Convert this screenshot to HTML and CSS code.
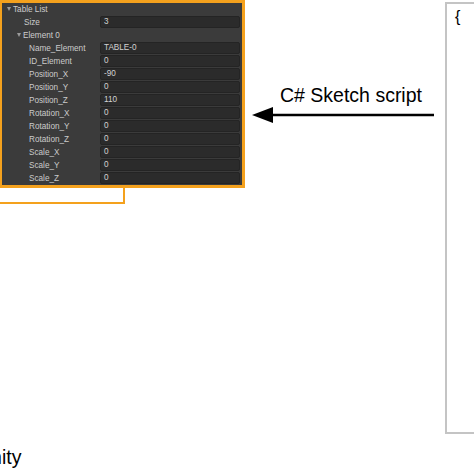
FILE: index.html
```html
<!DOCTYPE html>
<html>
<head>
<meta charset="utf-8">
<link rel="stylesheet" href="styles.css">
</head>
<body>
<div class="canvas">
  <div class="panel">
    <div class="row head lvl0"><span class="tri"></span><span>Table List</span></div>
    <div class="row prop"><span class="label lvl1">Size</span><span class="field">3</span></div>
    <div class="row head lvl1"><span class="tri"></span><span>Element 0</span></div>
    <div class="row prop"><span class="label lvl2">Name_Element</span><span class="field">TABLE-0</span></div>
    <div class="row prop"><span class="label lvl2">ID_Element</span><span class="field">0</span></div>
    <div class="row prop"><span class="label lvl2">Position_X</span><span class="field">-90</span></div>
    <div class="row prop"><span class="label lvl2">Position_Y</span><span class="field">0</span></div>
    <div class="row prop"><span class="label lvl2">Position_Z</span><span class="field">110</span></div>
    <div class="row prop"><span class="label lvl2">Rotation_X</span><span class="field">0</span></div>
    <div class="row prop"><span class="label lvl2">Rotation_Y</span><span class="field">0</span></div>
    <div class="row prop"><span class="label lvl2">Rotation_Z</span><span class="field">0</span></div>
    <div class="row prop"><span class="label lvl2">Scale_X</span><span class="field">0</span></div>
    <div class="row prop"><span class="label lvl2">Scale_Y</span><span class="field">0</span></div>
    <div class="row prop"><span class="label lvl2">Scale_Z</span><span class="field">0</span></div>
  </div>
  <div class="bracket"></div>

  <div class="arrow-label">C# Sketch script</div>
  <svg class="arrow" width="190" height="24" viewBox="0 0 190 24">
    <line x1="18" y1="12" x2="184" y2="12" stroke="#000" stroke-width="2.6"/>
    <polygon points="2,12 23,4 23,20" fill="#000"/>
  </svg>

  <div class="code-box"><span class="brace">{</span></div>

  <div class="caption">Unity</div>
</div>
</body>
</html>
```

FILE: styles.css
```css
html, body {
  margin: 0;
  padding: 0;
  background: #ffffff;
}

.canvas {
  position: relative;
  width: 474px;
  height: 474px;
  overflow: hidden;
  font-family: "Liberation Sans", Arial, sans-serif;
}

.panel {
  position: absolute;
  left: -1px;
  top: 0;
  width: 246px;
  height: 188px;
  box-sizing: border-box;
  border: 3px solid #f4a11d;
  background: #3b3b3b;
  padding: 0 2px 0 0;
  display: flex;
  flex-direction: column;
  gap: 1px;
  font-size: 8.2px;
  color: #cdcdcd;
}

.row {
  height: 12px;
  display: flex;
  align-items: center;
  flex: none;
}

.prop {
  display: grid;
  grid-template-columns: 98px 1fr;
}

.head.lvl0 { padding-left: 5px; }
.head.lvl1 { padding-left: 15px; }

.tri {
  width: 0;
  height: 0;
  border-left: 2.5px solid transparent;
  border-right: 2.5px solid transparent;
  border-top: 4px solid #9a9a9a;
  margin-right: 2px;
}

.label {
  white-space: nowrap;
  color: #cbcbcb;
}
.label.lvl1 { padding-left: 22px; }
.label.lvl2 { padding-left: 27px; }

.field {
  height: 12px;
  box-sizing: border-box;
  background: #2b2b2b;
  border: 1px solid #242424;
  border-radius: 2px;
  padding-left: 3px;
  line-height: 10px;
  color: #d2d2d2;
}

.bracket {
  position: absolute;
  left: -2px;
  top: 186px;
  width: 127px;
  height: 18px;
  box-sizing: border-box;
  border-right: 2px solid #f4a11d;
  border-bottom: 2px solid #f4a11d;
}

.arrow-label {
  position: absolute;
  left: 280px;
  top: 85px;
  font-size: 19.5px;
  line-height: 20px;
  color: #000;
  white-space: nowrap;
}

.arrow {
  position: absolute;
  left: 250px;
  top: 103px;
  display: block;
}

.code-box {
  position: absolute;
  left: 445px;
  top: 2px;
  width: 60px;
  height: 432px;
  box-sizing: border-box;
  border: 2px solid #c4c4c4;
  background: #fff;
}

.brace {
  position: absolute;
  left: 8px;
  top: 4px;
  font-size: 16px;
  line-height: 18px;
  color: #000;
}

.caption {
  position: absolute;
  left: -23px;
  top: 447px;
  font-size: 19.5px;
  line-height: 20px;
  color: #000;
  white-space: nowrap;
}
```
